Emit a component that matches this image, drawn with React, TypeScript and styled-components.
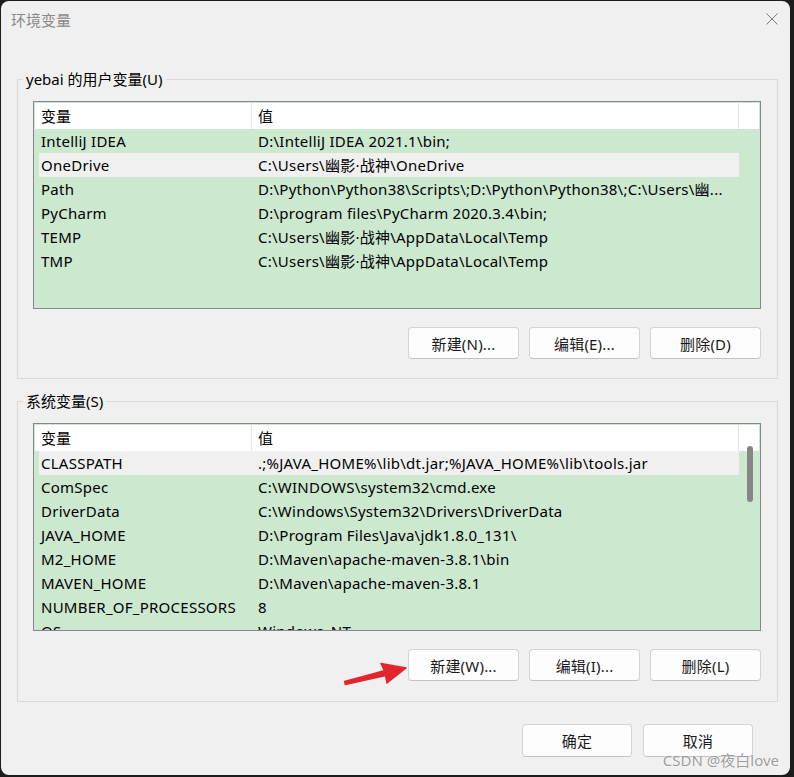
import React from 'react'
import styled, { createGlobalStyle } from 'styled-components'

const GlobalStyle = createGlobalStyle`
  html, body {
    margin: 0;
    padding: 0;
    background: #1c1c1c;
  }
  body {
    font-family: "Noto Sans", "Noto Sans CJK SC", sans-serif;
    font-size: 15px;
    color: #000;
  }
`

type EnvVar = { name: string; value: string }

const userVars: EnvVar[] = [
  { name: 'IntelliJ IDEA', value: 'D:\\IntelliJ IDEA 2021.1\\bin;' },
  { name: 'OneDrive', value: 'C:\\Users\\幽影·战神\\OneDrive' },
  { name: 'Path', value: 'D:\\Python\\Python38\\Scripts\\;D:\\Python\\Python38\\;C:\\Users\\幽...' },
  { name: 'PyCharm', value: 'D:\\program files\\PyCharm 2020.3.4\\bin;' },
  { name: 'TEMP', value: 'C:\\Users\\幽影·战神\\AppData\\Local\\Temp' },
  { name: 'TMP', value: 'C:\\Users\\幽影·战神\\AppData\\Local\\Temp' },
]

const systemVars: EnvVar[] = [
  { name: 'CLASSPATH', value: '.;%JAVA_HOME%\\lib\\dt.jar;%JAVA_HOME%\\lib\\tools.jar' },
  { name: 'ComSpec', value: 'C:\\WINDOWS\\system32\\cmd.exe' },
  { name: 'DriverData', value: 'C:\\Windows\\System32\\Drivers\\DriverData' },
  { name: 'JAVA_HOME', value: 'D:\\Program Files\\Java\\jdk1.8.0_131\\' },
  { name: 'M2_HOME', value: 'D:\\Maven\\apache-maven-3.8.1\\bin' },
  { name: 'MAVEN_HOME', value: 'D:\\Maven\\apache-maven-3.8.1' },
  { name: 'NUMBER_OF_PROCESSORS', value: '8' },
  { name: 'OS', value: 'Windows_NT' },
]

const Screen = styled.div`
  width: 794px;
  height: 777px;
  padding: 1px 4px 2px 1px;
  box-sizing: border-box;
  overflow: hidden;
`

const Window = styled.div`
  position: relative;
  height: 100%;
  background: #f0f0f0;
  border-radius: 8px;
  display: flex;
  flex-direction: column;
  overflow: hidden;
`

const TitleBar = styled.div`
  height: 36px;
  display: flex;
  align-items: center;
  justify-content: space-between;
  padding-left: 10px;
`

const Title = styled.span`
  color: #8a8a8a;
  font-size: 15px;
`

const CloseButton = styled.div`
  width: 36px;
  height: 36px;
  display: flex;
  align-items: center;
  justify-content: center;
`

const Body = styled.div`
  padding: 0 12px 0 16px;
  display: flex;
  flex-direction: column;
`

const Group = styled.fieldset<{ $top: number; $bottom: number }>`
  margin: ${(p) => p.$top}px 0 0;
  padding: 12px 16px ${(p) => p.$bottom}px 15px;
  border: 1px solid #dadada;
  min-width: 0;
`

const Legend = styled.legend`
  margin-left: -10px;
  padding: 0 3px;
  line-height: 20px;
  font-size: 15px;
`

const List = styled.div`
  position: relative;
  height: 208px;
  box-sizing: border-box;
  border: 1px solid #828790;
  padding: 1px;
  background: #cce8cf;
  overflow: hidden;
`

const HeaderRow = styled.div`
  display: grid;
  grid-template-columns: 217px 1fr 20px;
  height: 26px;
  background: #fff;
`

const HeaderCell = styled.div`
  padding-left: 6px;
  line-height: 26px;
  border-right: 1px solid #e5e5e5;
  &:last-child {
    border-right: none;
  }
`

const Rows = styled.div`
  margin-left: 4px;
  width: 700px;
`

const Row = styled.div<{ $selected?: boolean }>`
  display: grid;
  grid-template-columns: 212px 1fr;
  height: 24px;
  line-height: 24px;
  letter-spacing: 0.25px;
  background: ${(p) => (p.$selected ? '#f0f0f0' : 'transparent')};
  white-space: nowrap;
`

const NameCell = styled.div`
  padding-left: 2px;
  overflow: hidden;
`

const ValueCell = styled.div`
  padding-left: 7px;
  overflow: hidden;
`

const ScrollThumb = styled.div`
  position: absolute;
  left: 713px;
  top: 22px;
  width: 6px;
  height: 56px;
  border-radius: 3px;
  background: #868686;
`

const ButtonRow = styled.div<{ $gap: number }>`
  display: flex;
  justify-content: flex-end;
  gap: ${(p) => p.$gap}px;
`

const GroupButtons = styled(ButtonRow)`
  margin-top: 18px;
`

const Footer = styled(ButtonRow)`
  margin-top: 22px;
  padding-right: 37px;
`

const Button = styled.button<{ $w: number; $h: number }>`
  width: ${(p) => p.$w}px;
  height: ${(p) => p.$h}px;
  padding: 0;
  background: #fdfdfd;
  border: 1px solid #d3d3d3;
  border-bottom-color: #c2c2c2;
  border-radius: 4px;
  font-family: inherit;
  font-size: 15px;
  letter-spacing: 0.2px;
  color: #1a1a1a;
`

const Watermark = styled.div`
  position: absolute;
  right: 11px;
  bottom: 5px;
  font-size: 15px;
  color: rgba(140, 140, 140, 0.85);
  text-shadow: 0 0 2px #fff;
  white-space: nowrap;
`

const Arrow = styled.svg`
  position: absolute;
  left: 339px;
  top: 654px;
`

const VarList = ({ vars, selected, scroll }: { vars: EnvVar[]; selected: number; scroll?: boolean }) => (
  <List>
    <HeaderRow>
      <HeaderCell>变量</HeaderCell>
      <HeaderCell>值</HeaderCell>
      <HeaderCell />
    </HeaderRow>
    <Rows>
      {vars.map((v, i) => (
        <Row key={v.name} $selected={i === selected}>
          <NameCell>{v.name}</NameCell>
          <ValueCell>{v.value}</ValueCell>
        </Row>
      ))}
    </Rows>
    {scroll && <ScrollThumb />}
  </List>
)

const App = (): JSX.Element => {
  return (
    <Screen>
      <GlobalStyle />
      <Window>
        <TitleBar>
          <Title>环境变量</Title>
          <CloseButton>
            <svg width="12" height="12" viewBox="0 0 12 12">
              <path d="M0.5 0.5 L11.5 11.5 M11.5 0.5 L0.5 11.5" stroke="#7a7a7a" strokeWidth="1" />
            </svg>
          </CloseButton>
        </TitleBar>

        <Body>
          <Group $top={32} $bottom={19}>
            <Legend>yebai 的用户变量(U)</Legend>
            <VarList vars={userVars} selected={1} />
            <GroupButtons $gap={10}>
              <Button $w={111} $h={32}>新建(N)...</Button>
              <Button $w={111} $h={32}>编辑(E)...</Button>
              <Button $w={111} $h={32}>删除(D)</Button>
            </GroupButtons>
          </Group>

          <Group $top={12} $bottom={20}>
            <Legend>系统变量(S)</Legend>
            <VarList vars={systemVars} selected={0} scroll />
            <GroupButtons $gap={10}>
              <Button $w={111} $h={32}>新建(W)...</Button>
              <Button $w={111} $h={32}>编辑(I)...</Button>
              <Button $w={111} $h={32}>删除(L)</Button>
            </GroupButtons>
          </Group>
        </Body>

        <Footer $gap={11}>
          <Button $w={110} $h={33}>确定</Button>
          <Button $w={110} $h={33}>取消</Button>
        </Footer>

        <Arrow width="75" height="35" viewBox="0 0 75 35">
          <path
            d="M4.6 26.5 L44.4 15.6 L41 8.5 L66 13 L47 28 L45.6 20.4 L5.4 29.5 Z"
            fill="#e3262d"
            stroke="#e3262d"
            strokeWidth="1.5"
            strokeLinejoin="round"
          />
        </Arrow>

        <Watermark>CSDN @夜白love</Watermark>
      </Window>
    </Screen>
  )
}

export default App
